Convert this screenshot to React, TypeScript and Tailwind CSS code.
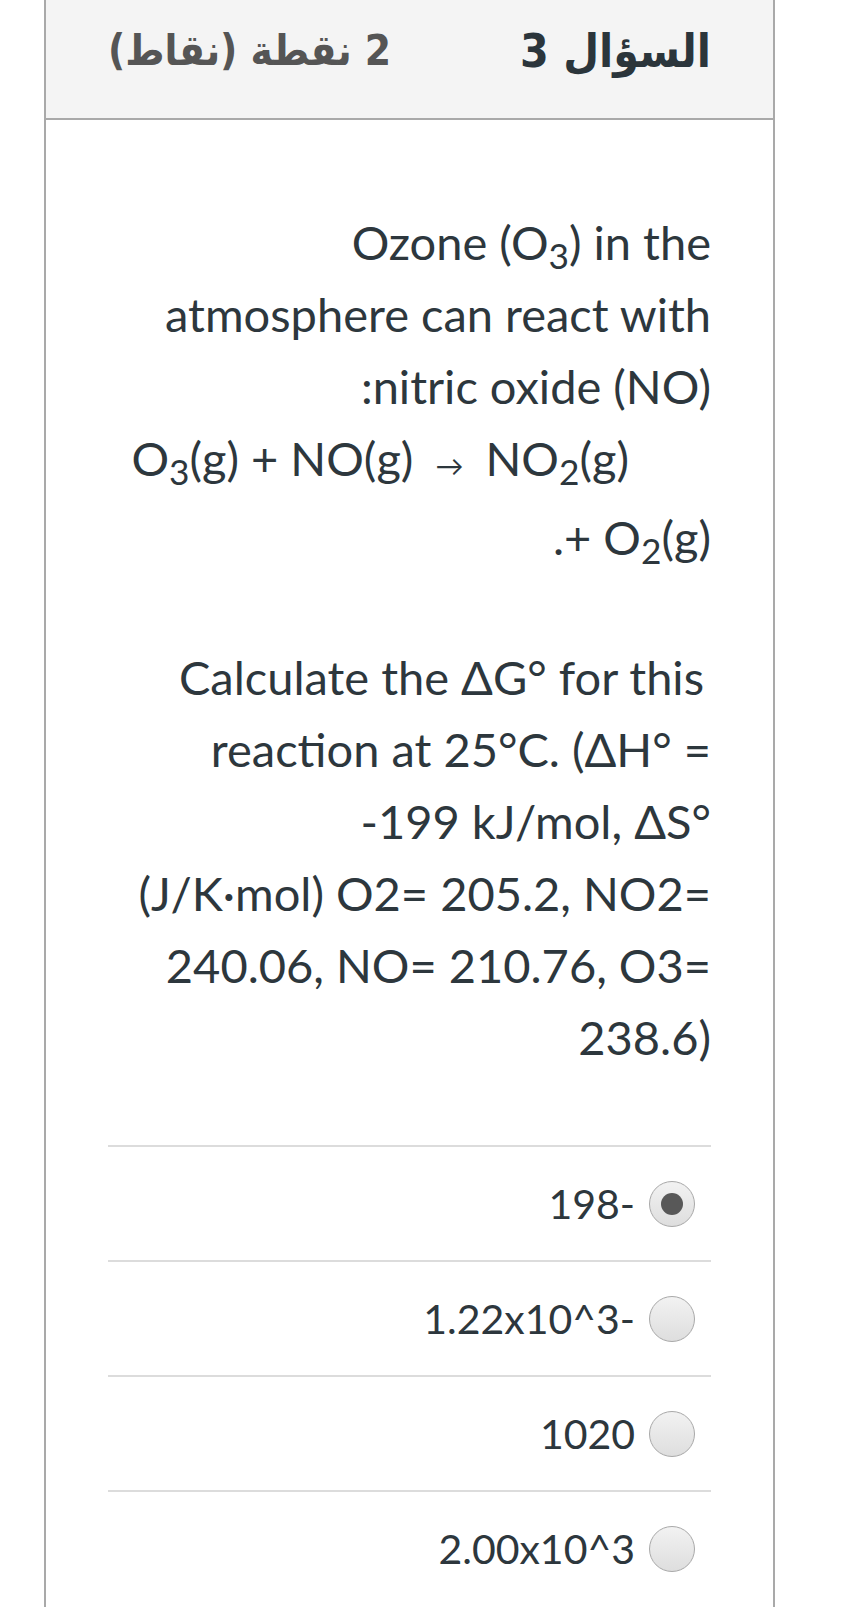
import React from "react"

const options = [
  { label: "198-", checked: true },
  { label: "1.22x10^3-", checked: false },
  { label: "1020", checked: false },
  { label: "2.00x10^3", checked: false },
]

function Radio({ checked }: { checked: boolean }) {
  return (
    <span className="flex h-[46px] w-[46px] shrink-0 items-center justify-center rounded-full border border-[#a8a8a8] bg-gradient-to-b from-[#f2f2f2] to-[#dedede]">
      {checked ? <span className="h-[22px] w-[22px] rounded-full bg-[#585858]" /> : null}
    </span>
  )
}

const arabic = { fontFamily: "'DejaVu Sans Condensed', 'DejaVu Sans', sans-serif" }

export default function App() {
  return (
    <div
      className="min-h-screen bg-white"
      style={{ fontFamily: "Lato, 'DejaVu Sans', sans-serif" }}
    >
      <div className="ml-[44px] min-h-[1607px] w-[731px] border-x-2 border-[#a9a9a9]">
        {/* header */}
        <div
          dir="rtl"
          className="flex h-[120px] items-start justify-between border-b-2 border-[#a9a9a9] bg-[#f4f4f4] px-[62px] pt-[20px]"
        >
          <span className="text-[46px] font-bold leading-[62px] text-[#2b353b]" style={arabic}>
            السؤال 3
          </span>
          <span className="text-[42px] font-bold leading-[62px] text-[#555555]" style={arabic}>
            2 نقطة (نقاط)
          </span>
        </div>

        {/* question text */}
        <div className="px-[62px] pt-[86px] text-right text-[47px] leading-[72px] text-[#2d373d]">
          <div>
            Ozone (O<sub>3</sub>) in the
          </div>
          <div>atmosphere can react with</div>
          <div>:nitric oxide (NO)</div>
          <div className="pr-[82px]">
            O<sub>3</sub>(g) + NO(g) <span className="mx-[10px] text-[28px]">→</span> NO<sub>2</sub>(g)
          </div>
          <div>
            .+ O<sub>2</sub>(g)
          </div>
          <div className="h-[68px]" />
          <div className="pr-[7px]">Calculate the ΔG° for this</div>
          <div>reaction at 25°C. (ΔH° =</div>
          <div>-199 kJ/mol, ΔS°</div>
          <div>(J/K·mol) O2= 205.2, NO2=</div>
          <div>240.06, NO= 210.76, O3=</div>
          <div>238.6)</div>
        </div>

        {/* answers */}
        <div className="mt-[72px] px-[62px]">
          {options.map((o) => (
            <label
              key={o.label}
              className="flex h-[115px] items-center justify-end gap-[14px] border-t-2 border-[#dcdcdc] pr-[16px]"
            >
              <span className="text-[41px] leading-none text-[#2d373d]">{o.label}</span>
              <Radio checked={o.checked} />
            </label>
          ))}
        </div>
      </div>
    </div>
  )
}
